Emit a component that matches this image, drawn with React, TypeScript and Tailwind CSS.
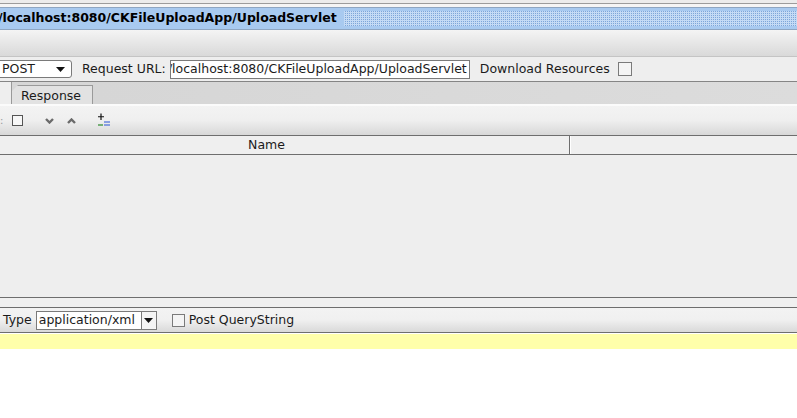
import React from 'react';

// toolbar glyphs
const Chevron = ({ up }: { up?: boolean }) => (
  <svg width="9" height="6" viewBox="0 0 9 6" className="block">
    <path d={up ? 'M1 5 L4.5 1.5 L8 5' : 'M1 1 L4.5 4.5 L8 1'} fill="none" stroke="#6b6b6b" strokeWidth="2.4" />
  </svg>
);

const AddRowIcon = () => (
  <svg width="14" height="14" viewBox="0 0 14 14" className="block">
    <path d="M4 0.5 V7 M1 3.75 H7" stroke="#111" strokeWidth="1.2" />
    <path d="M1 12 H6" stroke="#2a8a2a" strokeWidth="1.2" />
    <path d="M7 9 H13 M7 12 H13" stroke="#2855d8" strokeWidth="1.2" />
  </svg>
);

const Arrow = () => (
  <svg width="9" height="5" viewBox="0 0 9 5" className="block">
    <path d="M0 0 H9 L4.5 5 Z" fill="#111" />
  </svg>
);

export default function App() {
  return (
    <div className="w-[797px] h-[418px] bg-white overflow-hidden font-['DejaVu_Sans',sans-serif] text-[12.5px] text-[#1b1b1b] leading-none">
      {/* window chrome */}
      <div className="h-[3px] bg-[#ececec]" />
      <div className="h-px bg-[#9c9c9c]" />
      <div className="h-[3px] bg-[#f5f5f5]" />

      {/* title bar */}
      <div className="h-[23px] border-y border-[#8ea6c2] bg-[#a8caf0] flex items-center">
        <span className="font-bold text-[12.5px] text-black whitespace-nowrap -ml-[2px] pr-[7px]">/localhost:8080/CKFileUploadApp/UploadServlet</span>
        <div className="flex-1 h-[15px] bg-[#c4dbf5] bg-[conic-gradient(#7ea6d9_25%,#c4dbf5_0)] bg-[length:2px_2px]" />
      </div>

      <div className="h-[27px] bg-gradient-to-b from-[#f4f4f4] to-[#d9d9d9] border-b border-[#c4c4c4]" />

      {/* request row */}
      <div className="h-[25px] bg-[#eeeeee] border-b border-[#858585] flex items-center">
        <div className="w-[73px] h-[18px] -ml-px bg-white border border-[#7a7a7a] rounded-r-[3px] flex items-center justify-between pl-[2px] pr-[6px]">
          <span>POST</span>
          <Arrow />
        </div>
        <span className="ml-[10px]">Request URL:</span>
        <div className="ml-[4px] w-[300px] h-[19px] bg-white border border-[#7a7a7a] flex items-center justify-end overflow-hidden pr-[2px]">
          <span className="whitespace-nowrap shrink-0">/localhost:8080/CKFileUploadApp/UploadServlet</span>
        </div>
        <span className="ml-[10px]">Download Resources</span>
        <div className="ml-[8px] w-[14px] h-[14px] bg-[#f4f4f4] border border-[#7a7a7a]" />
      </div>

      {/* tabs */}
      <div className="h-[22px] bg-[#d7d7d7] flex items-end">
        <div className="w-[12px] h-[22px] bg-[#eeeeee] border-r border-[#9a9a9a]" />
        <div className="relative w-[81px] h-[19px] bg-[#e2e2e2] border-t border-r border-[#9a9a9a] [clip-path:polygon(6px_0,100%_0,100%_100%,0_100%,0_6px)] flex items-center pl-[9px] pt-[2px]">
          <span>Response</span>
        </div>
        <div className="flex-1 h-[22px] bg-gradient-to-r from-[#d6d6d6] to-[#dcdcdc]" />
      </div>

      <div className="h-[2px] bg-[#fbfbfb]" />

      {/* toolbar */}
      <div className="h-[30px] bg-gradient-to-b from-[#f3f3f3] via-[#efefef] to-[#d8d8d8] border-b border-[#6e6e6e] flex items-center">
        <span className="w-[3px] overflow-hidden text-[#999] text-[10px]">:</span>
        <div className="ml-[9px] w-[11px] h-[11px] border border-[#555] bg-[#f7f7f7]" />
        <div className="ml-[22px]"><Chevron /></div>
        <div className="ml-[13px]"><Chevron up /></div>
        <div className="ml-[21px] -mt-[2px]"><AddRowIcon /></div>
      </div>

      {/* table header */}
      <div className="h-[19px] bg-[#efefef] border-b border-[#6e6e6e] flex">
        <div className="w-[570px] flex items-center justify-center pr-[36px] border-r border-[#6e6e6e]">
          <span>Name</span>
        </div>
        <div className="flex-1 border-l border-white" />
      </div>

      {/* table body */}
      <div className="h-[143px] bg-[#eeeeee] border-b border-[#6e6e6e]" />
      <div className="h-[10px] bg-[#f0f0f0] border-b border-[#6e6e6e]" />

      {/* bottom toolbar */}
      <div className="h-[25px] bg-gradient-to-b from-[#f3f3f3] via-[#f0f0f0] to-[#d9d9d9] border-b border-[#6e6e6e] flex items-center">
        <span className="ml-[3px]">Type</span>
        <div className="ml-[4px] w-[121px] h-[19px] bg-white border border-[#7a7a7a] flex items-center">
          <span className="flex-1 pl-[2px]">application/xml</span>
          <div className="w-[15px] h-full border-l border-[#7a7a7a] bg-[#f4f4f4] rounded-r-[2px] flex items-center justify-center">
            <Arrow />
          </div>
        </div>
        <div className="ml-[15px] w-[13px] h-[13px] bg-[#f4f4f4] border border-[#7a7a7a]" />
        <span className="ml-[4px]">Post QueryString</span>
      </div>

      <div className="h-px bg-white" />
      <div className="h-[15px] bg-[#ffffaa]" />
    </div>
  );
}
